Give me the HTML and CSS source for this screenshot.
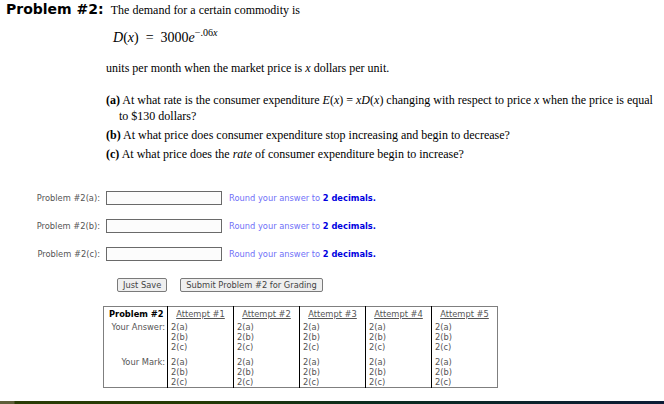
FILE: index.html
```html
<!DOCTYPE html>
<html>
<head>
<meta charset="utf-8">
<link rel="stylesheet" href="styles.css">
</head>
<body>
<div class="page">
  <div class="intro">
    <span class="prob-title">Problem #2:</span>
    <span class="serif">The demand for a certain commodity is</span>
  </div>
  <div class="formula serif">
    <i>D</i>(<i>x</i>)&nbsp; = &nbsp;3000<i>e</i><sup>−.06<i>x</i></sup>
  </div>
  <p class="units serif">units per month when the market price is <i>x</i> dollars per unit.</p>
  <ul class="parts serif">
    <li><b>(a)</b> At what rate is the consumer expenditure <i>E</i>(<i>x</i>) = <i>xD</i>(<i>x</i>) changing with respect to price <i>x</i> when the price is equal to $130 dollars?</li>
    <li><b>(b)</b> At what price does consumer expenditure stop increasing and begin to decrease?</li>
    <li><b>(c)</b> At what price does the <i>rate</i> of consumer expenditure begin to increase?</li>
  </ul>
  <div class="answers">
    <div class="answer-row">
      <label class="ans-label">Problem #2(a):</label>
      <input class="ans-input" type="text">
      <span class="hint">Round your answer to <b>2 decimals.</b></span>
    </div>
    <div class="answer-row">
      <label class="ans-label">Problem #2(b):</label>
      <input class="ans-input" type="text">
      <span class="hint">Round your answer to <b>2 decimals.</b></span>
    </div>
    <div class="answer-row">
      <label class="ans-label">Problem #2(c):</label>
      <input class="ans-input" type="text">
      <span class="hint">Round your answer to <b>2 decimals.</b></span>
    </div>
  </div>
  <div class="buttons">
    <button class="btn">Just Save</button>
    <button class="btn">Submit Problem #2 for Grading</button>
  </div>
  <table class="attempts">
    <colgroup>
      <col class="col-first">
      <col class="col-att">
      <col class="col-att">
      <col class="col-att">
      <col class="col-att">
      <col class="col-att">
    </colgroup>
    <tr class="head">
      <th class="first">Problem #2</th>
      <th><a href="#">Attempt #1</a></th>
      <th><a href="#">Attempt #2</a></th>
      <th><a href="#">Attempt #3</a></th>
      <th><a href="#">Attempt #4</a></th>
      <th><a href="#">Attempt #5</a></th>
    </tr>
    <tr class="ans">
      <td class="first">Your Answer:</td>
      <td>2(a)<br>2(b)<br>2(c)</td>
      <td>2(a)<br>2(b)<br>2(c)</td>
      <td>2(a)<br>2(b)<br>2(c)</td>
      <td>2(a)<br>2(b)<br>2(c)</td>
      <td>2(a)<br>2(b)<br>2(c)</td>
    </tr>
    <tr class="mark">
      <td class="first">Your Mark:</td>
      <td>2(a)<br>2(b)<br>2(c)</td>
      <td>2(a)<br>2(b)<br>2(c)</td>
      <td>2(a)<br>2(b)<br>2(c)</td>
      <td>2(a)<br>2(b)<br>2(c)</td>
      <td>2(a)<br>2(b)<br>2(c)</td>
    </tr>
  </table>
  <div class="footer-bar"></div>
</div>
</body>
</html>
```
FILE: styles.css
```css
html, body {
  margin: 0;
  padding: 0;
  background: #fff;
}
.page {
  width: 664px;
  height: 404px;
  overflow: hidden;
  font-family: "DejaVu Sans", Verdana, sans-serif;
  color: #000;
}
.serif {
  font-family: "Liberation Serif", "Times New Roman", serif;
  font-size: 12px;
}
.intro {
  height: 18px;
  line-height: 18px;
  padding-left: 6px;
  white-space: nowrap;
}
.prob-title {
  font-weight: bold;
  font-size: 14px;
  color: #000;
  margin-right: 2px;
}
.formula {
  margin: 11px 0 0 113px;
  height: 18px;
  line-height: 18px;
  font-size: 14px;
}
.formula sup {
  font-size: 10px;
  vertical-align: 6px;
  line-height: 0;
}
.units {
  margin: 12px 0 0 106px;
  line-height: 18px;
}
.parts {
  list-style: none;
  margin: 15px 0 0 106px;
  padding: 0;
}
.parts li {
  line-height: 16px;
  padding-left: 13px;
  text-indent: -13px;
  margin-bottom: 3px;
}
.answers {
  margin-top: 27px;
  display: flex;
  flex-direction: column;
  gap: 11px;
}
.answer-row {
  display: flex;
  align-items: center;
  height: 17px;
}
.ans-label {
  width: 106px;
  text-align: right;
  font-size: 8.3px;
  color: #555;
  padding-right: 6px;
  box-sizing: border-box;
}
.ans-input {
  width: 116px;
  height: 14px;
  box-sizing: border-box;
  border: 1px solid #6a6a6a;
  background: #fcfcfc;
  margin: 0;
  padding: 0;
}
.hint {
  margin-left: 7px;
  font-size: 8.3px;
  color: #7070f8;
  white-space: nowrap;
}
.hint b {
  color: #0000e0;
}
.buttons {
  margin: 16px 0 0 117px;
  display: flex;
  gap: 13px;
}
.btn {
  font-family: "DejaVu Sans", Verdana, sans-serif;
  font-size: 8.3px;
  color: #444;
  height: 14px;
  line-height: 11px;
  padding: 0 5px;
  background: #efefef;
  border: 1px solid #7a7a7a;
  border-radius: 2px;
}
.attempts {
  margin: 14px 0 0 103px;
  border-collapse: collapse;
  border: 1px solid #7f7f7f;
  font-size: 8.3px;
  color: #555;
  width: 394px;
  table-layout: fixed;
}
.col-first {
  width: 64px;
}
.col-att {
  width: 66px;
}
.attempts th, .attempts td {
  border-left: 1px solid #000;
  padding: 0 0 0 3px;
  vertical-align: top;
  text-align: left;
  line-height: 10px;
}
.attempts .first {
  border-left: 1px solid #7f7f7f;
}
.attempts .head th {
  height: 14px;
  padding: 0;
  vertical-align: middle;
  text-align: center;
  font-weight: normal;
}
.attempts .head th.first {
  text-align: left;
  padding-left: 5px;
  font-weight: bold;
  color: #000;
}
.attempts a {
  color: #555;
  text-decoration: underline;
}
.attempts .ans td {
  padding-top: 1px;
  padding-bottom: 2px;
}
.attempts .mark td {
  padding-top: 3px;
  padding-bottom: 0;
}
.attempts td.first {
  text-align: right;
  padding-right: 2px;
  padding-left: 0;
}
.footer-bar {
  margin-top: 13px;
  height: 3px;
  background: linear-gradient(90deg, #5e5e3a 0, #5e5e3a 14px, #2a3c06 15px, #243a04 30%, #0b2c1e 55%, #0c1c36 100%);
}
```
